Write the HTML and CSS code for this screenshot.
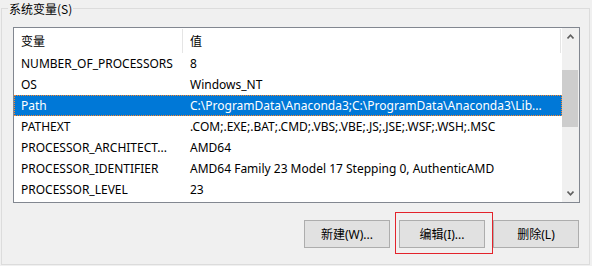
FILE: index.html
```html
<!DOCTYPE html>
<html lang="zh-CN">
<head>
<meta charset="utf-8">
<title>系统变量</title>
<link rel="stylesheet" href="styles.css">
</head>
<body>
<div class="window">
  <div class="group">
    <span class="legend">系统变量(S)</span>
    <div class="listview">
      <div class="list">
        <div class="header">
          <div class="hcell c1">变量</div>
          <div class="hcell c2">值</div>
        </div>
        <div class="row"><span class="c1">NUMBER_OF_PROCESSORS</span><span class="c2">8</span></div>
        <div class="row"><span class="c1">OS</span><span class="c2">Windows_NT</span></div>
        <div class="row selected"><span class="c1">Path</span><span class="c2">C:\ProgramData\Anaconda3;C:\ProgramData\Anaconda3\Lib...</span></div>
        <div class="row"><span class="c1">PATHEXT</span><span class="c2">.COM;.EXE;.BAT;.CMD;.VBS;.VBE;.JS;.JSE;.WSF;.WSH;.MSC</span></div>
        <div class="row"><span class="c1">PROCESSOR_ARCHITECT...</span><span class="c2">AMD64</span></div>
        <div class="row"><span class="c1">PROCESSOR_IDENTIFIER</span><span class="c2">AMD64 Family 23 Model 17 Stepping 0, AuthenticAMD</span></div>
        <div class="row"><span class="c1">PROCESSOR_LEVEL</span><span class="c2">23</span></div>
      </div>
      <div class="scrollbar">
        <div class="sb-btn">
          <svg width="7" height="5" viewBox="0 0 7 5"><polyline points="0.5,4.5 3.5,1.2 6.5,4.5" fill="none" stroke="#606060" stroke-width="1.6"/></svg>
        </div>
        <div class="track"><div class="thumb"></div></div>
        <div class="sb-btn">
          <svg width="7" height="5" viewBox="0 0 7 5"><polyline points="0.5,0.5 3.5,3.8 6.5,0.5" fill="none" stroke="#606060" stroke-width="1.6"/></svg>
        </div>
      </div>
    </div>
    <div class="buttons">
      <button class="btn btn-new">新建(W)...</button>
      <span class="focus-wrap"><button class="btn">编辑(I)...</button><span class="mark"></span></span>
      <button class="btn">删除(L)</button>
    </div>
  </div>
</div>
</body>
</html>
```
FILE: styles.css
```css
html, body {
  margin: 0;
  padding: 0;
  background: #f0f0f0;
}
body {
  font-family: "Noto Sans", "Noto Sans CJK SC", sans-serif;
  font-size: 12px;
  color: #000;
}
.window {
  width: 592px;
  height: 266px;
  box-sizing: border-box;
  padding: 8px 2px 1px 1px;
}
.group {
  position: relative;
  box-sizing: border-box;
  height: 257px;
  border: 1px solid #dcdcdc;
  padding: 18px 9px 0 11px;
}
.legend {
  position: absolute;
  top: -9px;
  left: 6px;
  padding: 0 1px;
  background: #f0f0f0;
  line-height: 18px;
  font-family: "Noto Sans CJK SC", sans-serif;
}
.listview {
  display: flex;
  height: 176px;
  box-sizing: border-box;
  border: 1px solid #828790;
  background: #fff;
}
.list {
  flex: 1;
  min-width: 0;
  overflow: hidden;
}
.header {
  display: flex;
  height: 25px;
}
.hcell {
  box-sizing: border-box;
  margin-top: 1px;
  height: 24px;
  line-height: 23px;
  padding-left: 7px;
  border-right: 1px solid #e5e5e5;
  font-family: "Noto Sans CJK SC", sans-serif;
}
.hcell.c1 { width: 169px; }
.hcell.c2 { width: 378px; }
.row {
  display: flex;
  height: 21px;
  line-height: 21px;
  white-space: nowrap;
}
.row .c1 {
  box-sizing: border-box;
  width: 169px;
  flex: none;
  padding-left: 7px;
  overflow: hidden;
}
.row .c2 {
  flex: 1;
  min-width: 0;
  padding-left: 7px;
  overflow: hidden;
}
.row.selected {
  background: #0078d7;
  color: #fff;
  outline: 1px dotted #ff8728;
  outline-offset: -1px;
}
.scrollbar {
  width: 17px;
  flex: none;
  background: #f0f0f0;
  display: flex;
  flex-direction: column;
}
.sb-btn {
  height: 17px;
  display: flex;
  align-items: center;
  justify-content: center;
}
.track {
  flex: 1;
}
.thumb {
  margin: 25px 1px 0 0;
  height: 57px;
  background: #cdcdcd;
}
.buttons {
  display: flex;
  justify-content: flex-end;
  align-items: center;
  gap: 8px;
  margin-top: 17px;
  padding-right: 1px;
}
.btn {
  width: 86px;
  height: 28px;
  box-sizing: border-box;
  margin: 0;
  padding: 0;
  border: 1px solid #adadad;
  background: #e1e1e1;
  color: #000;
  font-family: "Noto Sans", "Noto Sans CJK SC", sans-serif;
  font-size: 12px;
}
.btn-new { margin-right: 1px; }
.focus-wrap {
  position: relative;
  display: flex;
}
.mark {
  position: absolute;
  left: -4px;
  top: -8px;
  right: -8px;
  bottom: -6px;
  border: 1px solid #e3232b;
  pointer-events: none;
}
```
